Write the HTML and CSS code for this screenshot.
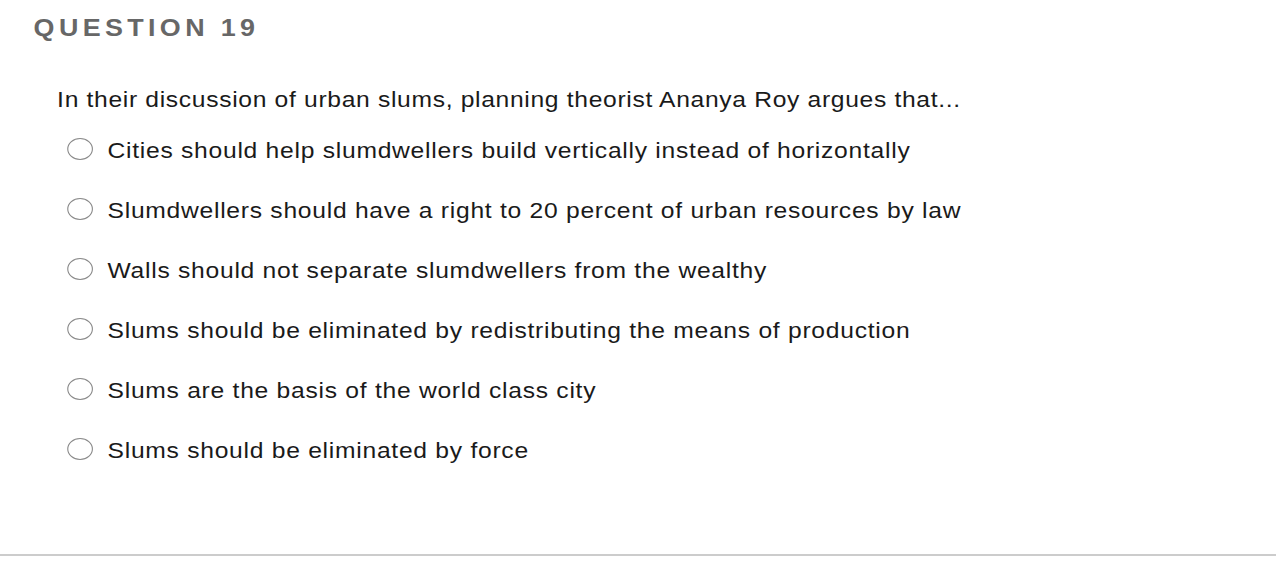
FILE: index.html
```html
<!DOCTYPE html>
<html>
<head>
<meta charset="utf-8">
<link rel="stylesheet" href="styles.css">
</head>
<body>
<div class="page">
  <div class="content">
    <h2 class="qtitle">QUESTION 19</h2>
    <p class="qtext">In their discussion of urban slums, planning theorist Ananya Roy argues that...</p>
    <ul class="options">
      <li class="option"><span class="radio"></span><span class="label">Cities should help slumdwellers build vertically instead of horizontally</span></li>
      <li class="option"><span class="radio"></span><span class="label">Slumdwellers should have a right to 20 percent of urban resources by law</span></li>
      <li class="option"><span class="radio"></span><span class="label">Walls should not separate slumdwellers from the wealthy</span></li>
      <li class="option"><span class="radio"></span><span class="label">Slums should be eliminated by redistributing the means of production</span></li>
      <li class="option"><span class="radio"></span><span class="label">Slums are the basis of the world class city</span></li>
      <li class="option"><span class="radio"></span><span class="label">Slums should be eliminated by force</span></li>
    </ul>
  </div>
  <div class="rule"></div>
</div>
</body>
</html>
```

FILE: styles.css
```css
html, body {
  margin: 0;
  padding: 0;
  background: #ffffff;
}
.page {
  width: 1276px;
  height: 564px;
  overflow: hidden;
  display: flex;
  flex-direction: column;
  font-family: "Liberation Sans", Arial, sans-serif;
}
.content {
  width: 1139px;
  display: flex;
  flex-direction: column;
  transform: scaleX(1.12);
  transform-origin: 0 0;
}
.qtitle {
  margin: 14px 0 0 30px;
  font-size: 24px;
  line-height: 28px;
  font-weight: bold;
  letter-spacing: 3.9px;
  color: #676767;
}
.qtext {
  margin: 43px 0 0 51px;
  font-size: 22px;
  line-height: 30px;
  letter-spacing: 0.6px;
  color: #1a1a1a;
}
.options {
  list-style: none;
  margin: 6px 0 0 0;
  padding: 0 0 0 60px;
}
.option {
  height: 60px;
  display: flex;
  align-items: center;
  gap: 13px;
}
.radio {
  width: 23px;
  height: 22px;
  box-sizing: border-box;
  border: 1.5px solid #8a8a8a;
  border-radius: 50%;
  flex: none;
  margin-bottom: 4px;
}
.label {
  font-size: 22px;
  line-height: 30px;
  letter-spacing: 0.65px;
  color: #1a1a1a;
}
.rule {
  margin-top: 73px;
  height: 2px;
  background: #cccccc;
}
```
